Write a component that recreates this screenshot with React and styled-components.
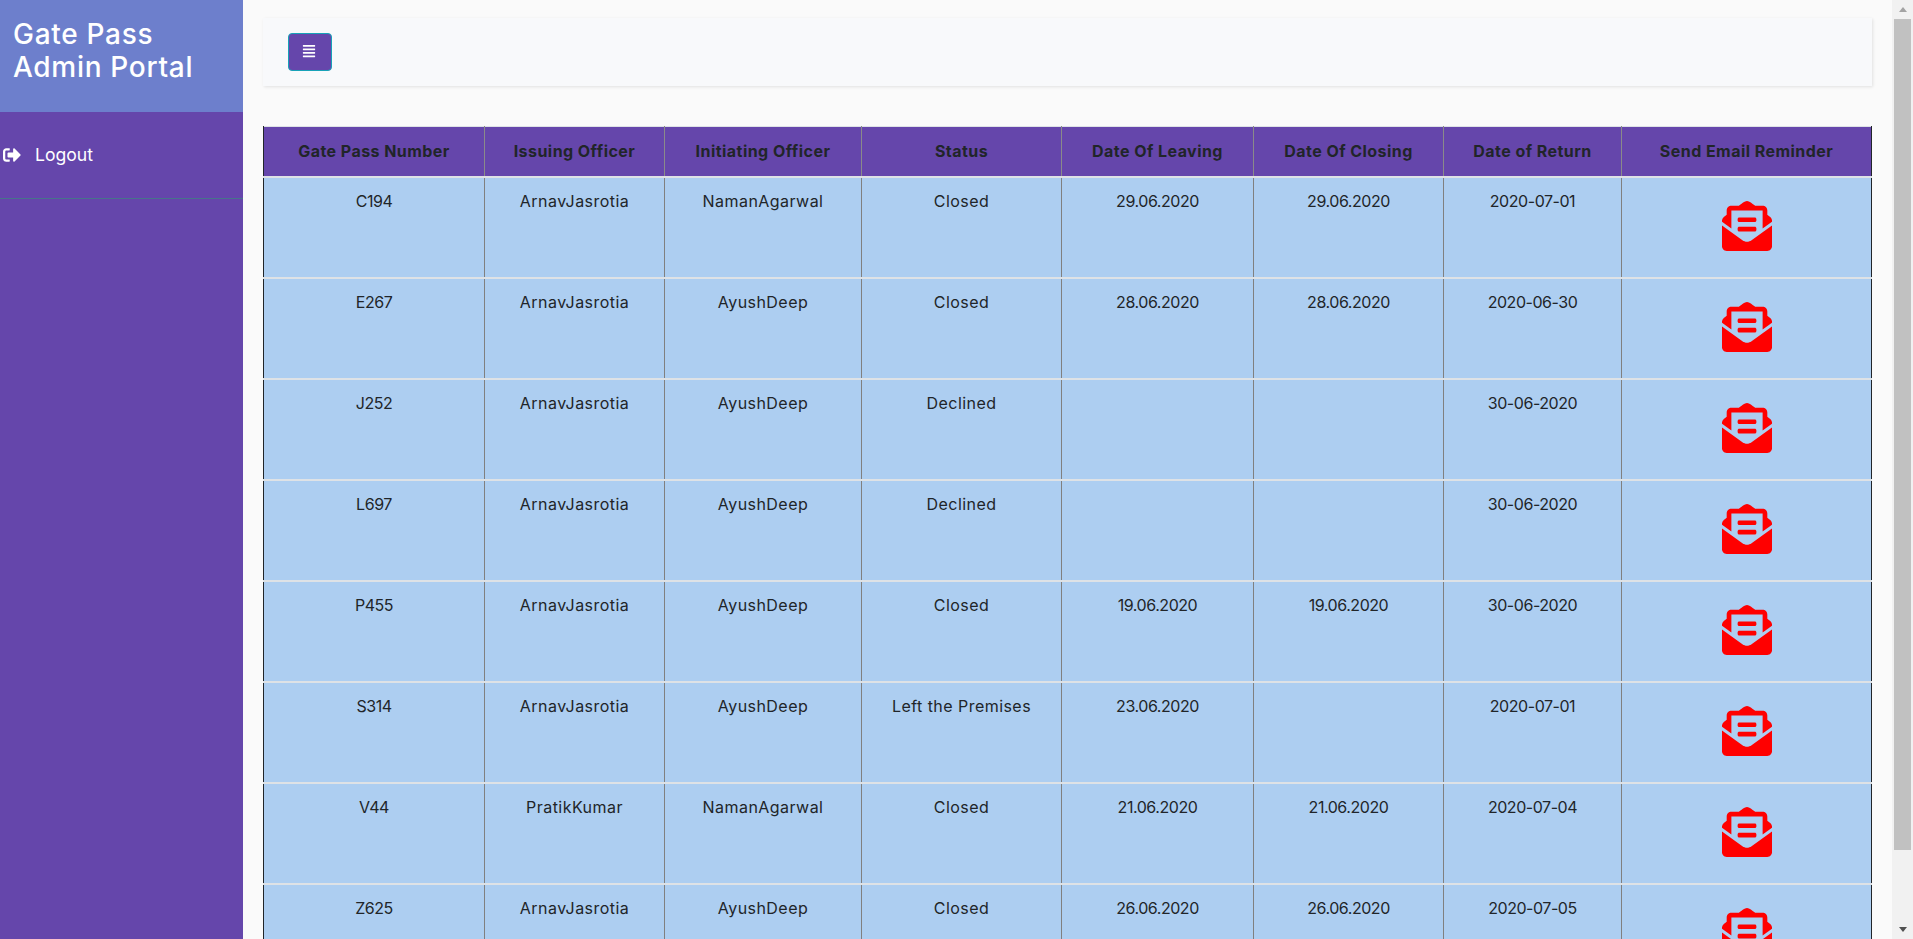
import React from "react";
import styled, { createGlobalStyle } from "styled-components";
import { FaAlignJustify, FaEnvelopeOpenText, FaSignOutAlt } from "react-icons/fa";

const passes = [
  { id: "C194", issuer: "ArnavJasrotia", initiator: "NamanAgarwal", status: "Closed", leaving: "29.06.2020", closing: "29.06.2020", back: "2020-07-01" },
  { id: "E267", issuer: "ArnavJasrotia", initiator: "AyushDeep", status: "Closed", leaving: "28.06.2020", closing: "28.06.2020", back: "2020-06-30" },
  { id: "J252", issuer: "ArnavJasrotia", initiator: "AyushDeep", status: "Declined", leaving: "", closing: "", back: "30-06-2020" },
  { id: "L697", issuer: "ArnavJasrotia", initiator: "AyushDeep", status: "Declined", leaving: "", closing: "", back: "30-06-2020" },
  { id: "P455", issuer: "ArnavJasrotia", initiator: "AyushDeep", status: "Closed", leaving: "19.06.2020", closing: "19.06.2020", back: "30-06-2020" },
  { id: "S314", issuer: "ArnavJasrotia", initiator: "AyushDeep", status: "Left the Premises", leaving: "23.06.2020", closing: "", back: "2020-07-01" },
  { id: "V44", issuer: "PratikKumar", initiator: "NamanAgarwal", status: "Closed", leaving: "21.06.2020", closing: "21.06.2020", back: "2020-07-04" },
  { id: "Z625", issuer: "ArnavJasrotia", initiator: "AyushDeep", status: "Closed", leaving: "26.06.2020", closing: "26.06.2020", back: "2020-07-05" },
];

const columns = [
  { title: "Gate Pass Number", width: 221 },
  { title: "Issuing Officer", width: 180 },
  { title: "Initiating Officer", width: 197 },
  { title: "Status", width: 200 },
  { title: "Date Of Leaving", width: 192 },
  { title: "Date Of Closing", width: 190 },
  { title: "Date of Return", width: 178 },
  { title: "Send Email Reminder", width: 250 },
];

const GlobalStyle = createGlobalStyle`
  html, body {
    margin: 0;
    height: 100%;
    overflow: hidden;
    background: #fafafa;
    font-family: Inter, "Open Sans", sans-serif;
    color: #212529;
  }

  * {
    box-sizing: border-box;
  }
`;

const Frame = styled.div`
  display: flex;
  height: 100vh;
`;

const Scroller = styled.div`
  flex: 1;
  min-width: 0;
  height: 100%;
  overflow: hidden;
`;

const ScrollRail = styled.div`
  display: flex;
  flex: 0 0 21px;
  flex-direction: column;
  align-items: center;
  background: #f1f1f1;
`;

const ScrollArrow = styled.div`
  flex: 0 0 19px;
  display: flex;
  align-items: center;
  justify-content: center;

  &::before {
    content: "";
    border-left: 4.5px solid transparent;
    border-right: 4.5px solid transparent;
    ${(p) =>
      p.$down
        ? "border-top: 5px solid #505050;"
        : "border-bottom: 5px solid #a3a3a3;"}
  }
`;

const ScrollThumb = styled.div`
  flex: 0 0 831px;
  width: 17px;
  background: #c1c1c1;
`;

const ScrollSpace = styled.div`
  flex: 1;
`;

const Wrapper = styled.div`
  display: flex;
  align-items: stretch;
  min-height: 1018px;
`;

const Sidebar = styled.nav`
  flex: 0 0 243px;
  background: #6546ab;
  color: #fff;
`;

const SidebarHeader = styled.div`
  height: 112px;
  padding: 18px 13px 0;
  background: #6d7fcc;
`;

const Title = styled.h3`
  margin: 0;
  font-size: 28px;
  font-weight: 500;
  letter-spacing: 0.7px;
  line-height: 32.5px;
`;

const Menu = styled.ul`
  margin: 0;
  padding: 20px 0;
  list-style: none;
  border-bottom: 1px solid #47748b;
`;

const MenuLink = styled.a`
  display: flex;
  align-items: center;
  gap: 14px;
  padding: 10px 3px;
  color: #fff;
  font-size: 17.6px;
  line-height: 26px;
  text-decoration: none;
`;

const Content = styled.main`
  flex: 1;
  min-width: 0;
  padding: 18px 20px 0;
`;

const TopBar = styled.div`
  height: 68px;
  margin-bottom: 40px;
  padding: 15px 25px;
  background: #f8f9fb;
  box-shadow: 1px 1px 3px rgba(0, 0, 0, 0.1);
`;

const ToggleButton = styled.button`
  display: flex;
  align-items: center;
  justify-content: center;
  width: 44px;
  height: 38px;
  padding: 0 2px 2px 0;
  background: #6546ab;
  border: 1px solid #17a2b8;
  border-radius: 4px;
  color: #fff;
`;

const Table = styled.table`
  width: calc(100% - 1px);
  table-layout: fixed;
  border-collapse: collapse;
  border-top: 1px solid #dee2e6;
  border-left: 1px solid #212529;
  border-right: 1px solid #212529;
`;

const HeadCell = styled.th`
  width: ${(p) => p.$width}px;
  height: 50px;
  padding: 12px 0;
  background: #6546ab;
  border-left: 1px solid #8a8a8a;
  border-bottom: 2px solid #dee2e6;
  font-size: 16px;
  font-weight: 700;
  letter-spacing: 0.45px;
  line-height: 24px;
  text-align: center;

  &:first-child {
    border-left: 1px solid #212529;
  }
`;

const Cell = styled.td`
  height: 101px;
  padding: ${(p) => (p.$icon ? "23px 0 0" : "11px 0 0")};
  background: #adcef1;
  border-left: 1px solid #808080;
  border-bottom: 2px solid #dee2e6;
  font-size: 16px;
  letter-spacing: ${(p) => (p.$numeric ? "-0.45px" : "0.45px")};
  line-height: 24px;
  text-align: center;
  vertical-align: top;

  &:first-child {
    border-left: 1px solid #212529;
  }
`;

const MailIcon = styled(FaEnvelopeOpenText)`
  display: block;
  margin: 0 auto;
  color: #ff0000;
`;

export default function App() {
  return (
    <Frame>
      <GlobalStyle />
      <Scroller>
        <Wrapper>
          <Sidebar>
            <SidebarHeader>
              <Title>
                Gate Pass
                <br />
                Admin Portal
              </Title>
            </SidebarHeader>
            <Menu>
              <li>
                <MenuLink href="#logout">
                  <FaSignOutAlt size={18} />
                  Logout
                </MenuLink>
              </li>
            </Menu>
          </Sidebar>
          <Content>
            <TopBar>
              <ToggleButton type="button" aria-label="Toggle sidebar">
                <FaAlignJustify size={14} />
              </ToggleButton>
            </TopBar>
            <Table>
              <thead>
                <tr>
                  {columns.map((col) => (
                    <HeadCell key={col.title} $width={col.width}>
                      {col.title}
                    </HeadCell>
                  ))}
                </tr>
              </thead>
              <tbody>
                {passes.map((pass) => (
                  <tr key={pass.id}>
                    <Cell $numeric>{pass.id}</Cell>
                    <Cell>{pass.issuer}</Cell>
                    <Cell>{pass.initiator}</Cell>
                    <Cell>{pass.status}</Cell>
                    <Cell $numeric>{pass.leaving}</Cell>
                    <Cell $numeric>{pass.closing}</Cell>
                    <Cell $numeric>{pass.back}</Cell>
                    <Cell $icon>
                      <MailIcon size={50} />
                    </Cell>
                  </tr>
                ))}
              </tbody>
            </Table>
          </Content>
        </Wrapper>
      </Scroller>
      <ScrollRail>
        <ScrollArrow />
        <ScrollThumb />
        <ScrollSpace />
        <ScrollArrow $down />
      </ScrollRail>
    </Frame>
  );
}
